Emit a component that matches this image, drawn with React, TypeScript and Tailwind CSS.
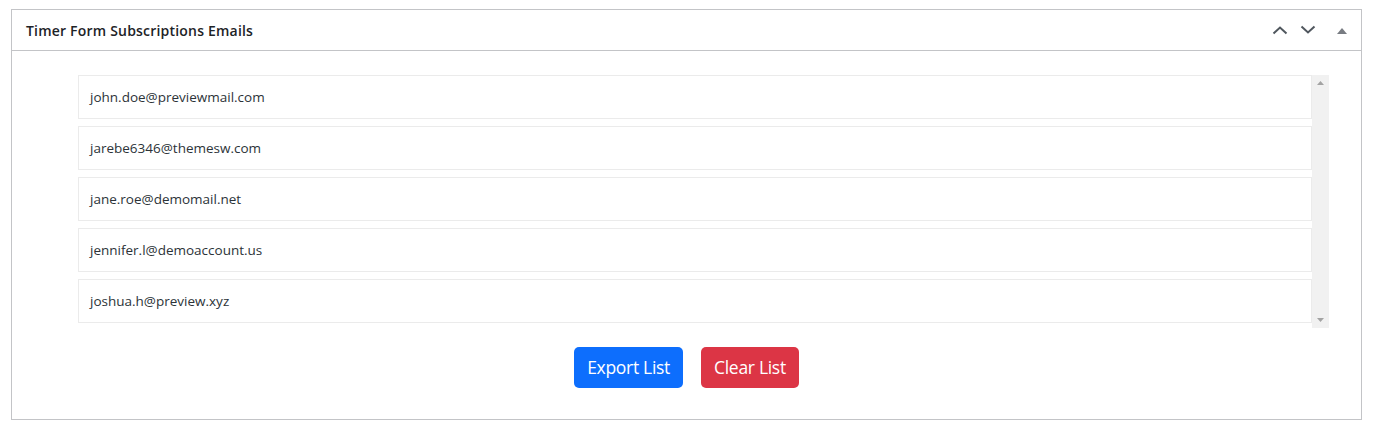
import React from "react";

const emails = [
  "john.doe@previewmail.com",
  "jarebe6346@themesw.com",
  "jane.roe@demomail.net",
  "jennifer.l@demoaccount.us",
  "joshua.h@preview.xyz",
];

export default function App() {
  return (
    <div className="min-h-[433px] bg-white pt-[9px] pl-[11px]" style={{ fontFamily: '"Open Sans", "Noto Sans", sans-serif' }}>
      <div className="w-[1351px] h-[411px] border border-[#c3c4c7] bg-white flex flex-col">
        {/* Header */}
        <div className="h-[41px] border-b border-[#c3c4c7] flex items-center pl-[14px] pr-[14px] shrink-0">
          <h2 className="text-[14px] font-semibold text-[#1d2327] tracking-[0.2px]">Timer Form Subscriptions Emails</h2>
          <div className="ml-auto flex items-center">
            <svg width="16" height="10" viewBox="0 0 16 10" className="mr-[12px]">
              <path d="M1.5 8.5 L8 2.5 L14.5 8.5" fill="none" stroke="#50575e" strokeWidth="2" />
            </svg>
            <svg width="16" height="10" viewBox="0 0 16 10" className="mr-[21px]">
              <path d="M1.5 1.5 L8 7.5 L14.5 1.5" fill="none" stroke="#50575e" strokeWidth="2" />
            </svg>
            <svg width="10" height="7" viewBox="0 0 10 7">
              <path d="M0 7 L5 1 L10 7 Z" fill="#787c82" />
            </svg>
          </div>
        </div>

        {/* Body */}
        <div className="flex-1 flex flex-col pt-[24px] pl-[66px] pr-[32px]">
          <div className="flex h-[253px]">
            <div className="flex-1 overflow-hidden">
              {emails.map((email) => (
                <div
                  key={email}
                  className="h-[44px] mb-[7px] border border-[#ebebeb] flex items-center pl-[11px] text-[13.5px] text-[#2c3338]"
                >
                  {email}
                </div>
              ))}
            </div>
            <div className="w-[17px] bg-[#f1f1f1] flex flex-col items-center justify-between py-[6px]">
              <svg width="7" height="4" viewBox="0 0 7 4">
                <path d="M0 4 L3.5 0 L7 4 Z" fill="#a3a3a3" />
              </svg>
              <svg width="7" height="4" viewBox="0 0 7 4">
                <path d="M0 0 L3.5 4 L7 0 Z" fill="#a3a3a3" />
              </svg>
            </div>
          </div>

          <div className="flex justify-center gap-[18px] mt-[19px] -ml-[66px] -mr-[32px]">
            <button className="h-[41px] px-[13px] rounded-[5px] bg-[#0d6efd] text-white text-[17.5px] tracking-[-0.3px]">
              Export List
            </button>
            <button className="h-[41px] px-[13px] rounded-[5px] bg-[#dc3545] text-white text-[17.5px] tracking-[-0.3px]">
              Clear List
            </button>
          </div>
        </div>
      </div>
    </div>
  );
}
